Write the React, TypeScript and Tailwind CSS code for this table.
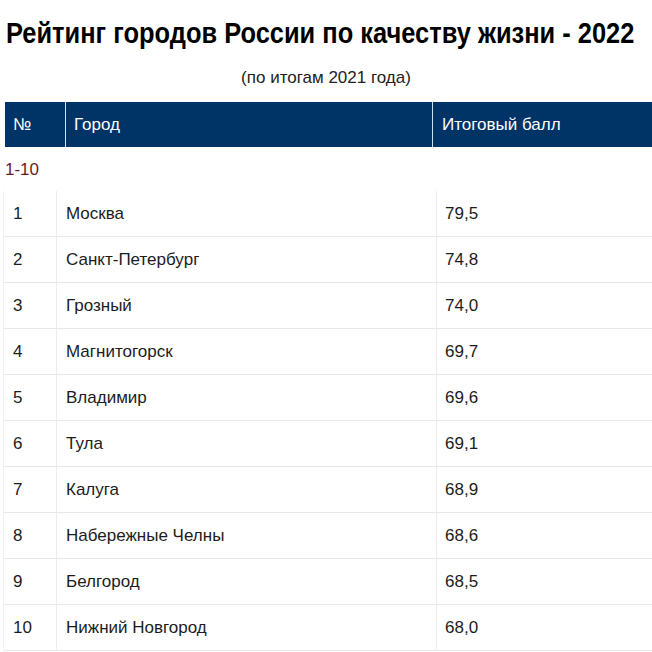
const rows = [
  { n: 1, city: 'Москва', score: '79,5' },
  { n: 2, city: 'Санкт-Петербург', score: '74,8' },
  { n: 3, city: 'Грозный', score: '74,0' },
  { n: 4, city: 'Магнитогорск', score: '69,7' },
  { n: 5, city: 'Владимир', score: '69,6' },
  { n: 6, city: 'Тула', score: '69,1' },
  { n: 7, city: 'Калуга', score: '68,9' },
  { n: 8, city: 'Набережные Челны', score: '68,6' },
  { n: 9, city: 'Белгород', score: '68,5' },
  { n: 10, city: 'Нижний Новгород', score: '68,0' },
];

export default function App() {
  return (
    <div className="w-[652px] h-[652px] overflow-hidden bg-white font-['Liberation_Sans',Arial,sans-serif] text-[#1c1c1c]">
      <div className="pl-[6px] pt-[16px] h-[62px]">
        <h1 className="origin-left scale-x-[0.877] whitespace-nowrap text-[29px] leading-[34px] font-bold text-black">
          Рейтинг городов России по качеству жизни - 2022
        </h1>
      </div>
      <p className="h-[40px] text-center text-[17px] leading-[32px] text-[#222]">(по итогам 2021 года)</p>

      {/* Header */}
      <div className="ml-[5px] h-[45px] bg-[#003366] text-white text-[17px] flex">
        <div className="w-[61px] flex items-center pl-[8px] border-r border-[#cfe0f0]">№</div>
        <div className="w-[367px] flex items-center pl-[8px] border-r border-[#cfe0f0]">Город</div>
        <div className="flex-1 flex items-center pl-[9px]">Итоговый балл</div>
      </div>

      <div className="h-[44px] flex items-center pl-[5px] pt-[2px] text-[17px] text-[#6b1b1b]">1-10</div>

      {/* Rows */}
      <div className="ml-[3px] border-l border-[#f0f0f0] text-[17px]">
        {rows.map((r) => (
          <div key={r.n} className="grid grid-cols-[53px_380px_1fr] h-[46px] border-b border-[#e8e8e8]">
            <div className="flex items-center pl-[9px] pt-[1px] border-r border-[#ececec]">{r.n}</div>
            <div className="flex items-center pl-[9px] pt-[1px] border-r border-[#ececec]">{r.city}</div>
            <div className="flex items-center pl-[8px] pt-[1px]">{r.score}</div>
          </div>
        ))}
      </div>
    </div>
  );
}
